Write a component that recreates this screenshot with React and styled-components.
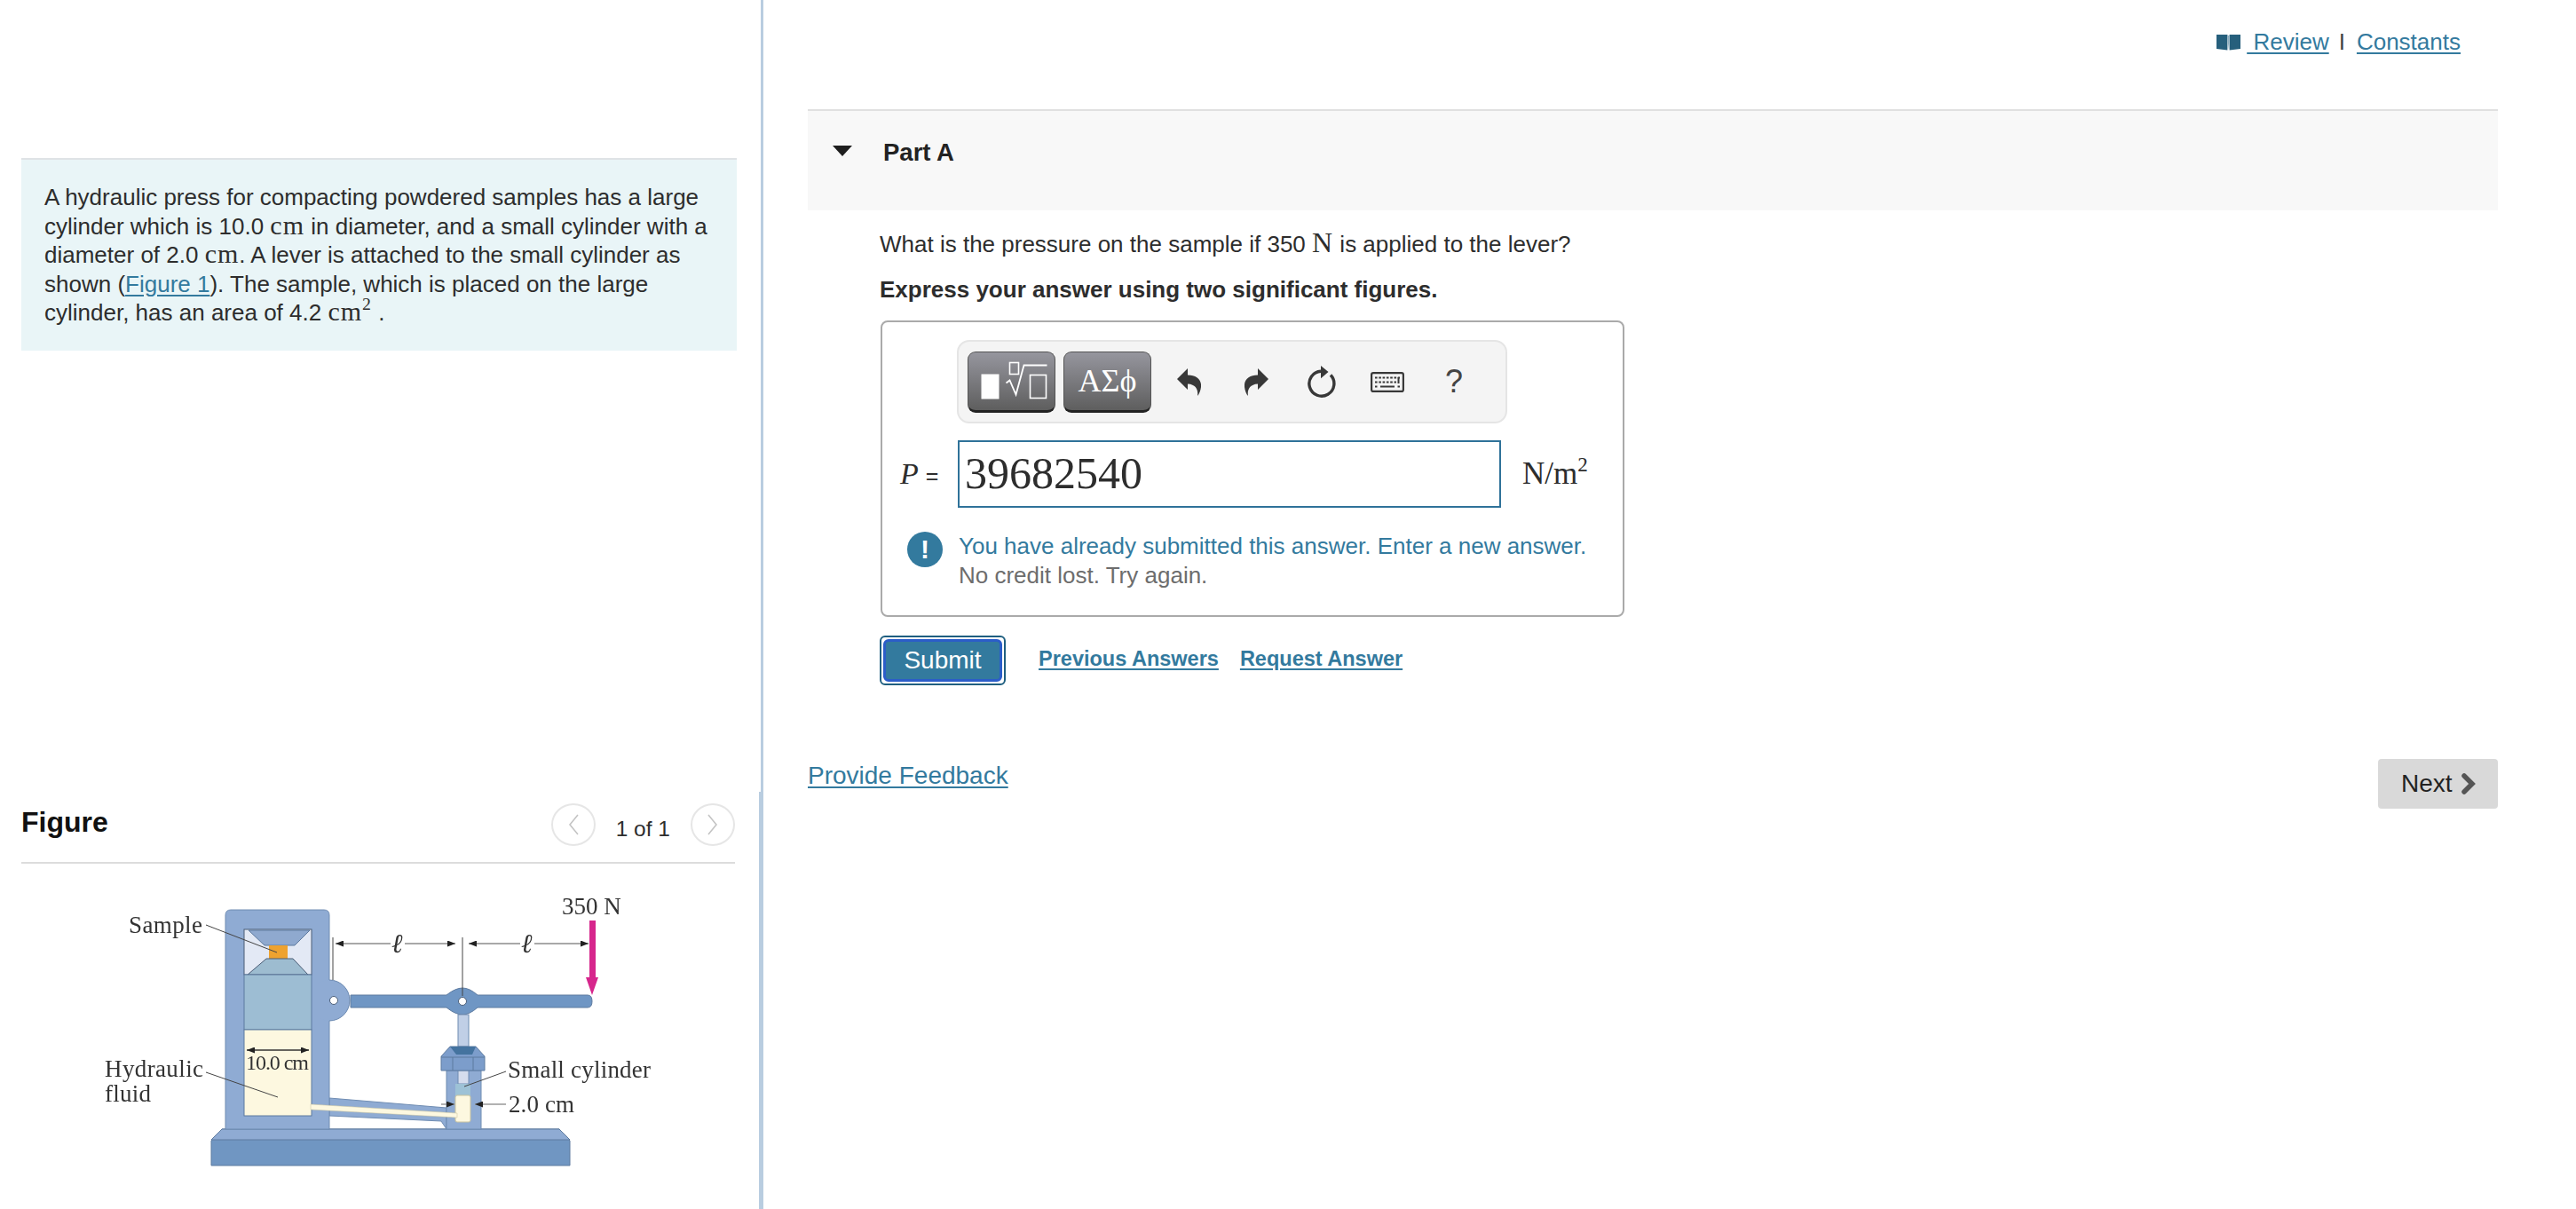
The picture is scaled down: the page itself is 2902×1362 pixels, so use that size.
import React from 'react';
import styled, { createGlobalStyle } from 'styled-components';

const GlobalStyle = createGlobalStyle`
  html, body {
    margin: 0;
    padding: 0;
    background: #fff;
  }
  body {
    font-family: "Liberation Sans", Arial, sans-serif;
    font-size: 26px;
    color: #2d2d2d;
  }
`;

const Page = styled.div`
  display: flex;
  width: 2902px;
  height: 1362px;
  overflow: hidden;
`;

const LeftColumn = styled.div`
  display: flex;
  flex-direction: column;
  width: 860px;
  flex: none;
`;

const ProblemPane = styled.section`
  height: 892px;
  box-sizing: border-box;
  padding: 178px 27px 0 24px;
  border-right: 3px solid #b9cde0;
`;

const InfoBox = styled.div`
  width: 806px;
  height: 217px;
  box-sizing: border-box;
  padding: 26px 26px 0;
  background: #e9f5f7;
  border-top: 2px solid #dfe3e6;
  font-size: 26px;
  line-height: 32.6px;
`;

const Link = styled.a`
  color: #337a9e;
  text-decoration: underline;
  text-underline-offset: 3px;
`;

const MathText = styled.span`
  font-family: "Liberation Serif", "Times New Roman", serif;
  font-size: ${(p) => p.$size || 30}px;
  line-height: 0;
  letter-spacing: 1px;
`;

const Sup = styled.sup`
  font-size: 0.66em;
  line-height: 0;
  vertical-align: 0.62em;
`;

const FigurePane = styled.section`
  flex: 1;
  box-sizing: border-box;
  padding: 13px 30px 0 24px;
  border-right: 5px solid #b9cde0;
`;

const FigureHeader = styled.div`
  display: flex;
  align-items: center;
  justify-content: space-between;
  height: 66px;
  border-bottom: 2px solid #dcdcdc;
  width: 804px;
`;

const FigureTitle = styled.h2`
  margin: 0 0 24px;
  font-size: 32px;
  line-height: 38px;
  font-weight: 700;
  color: #111;
`;

const Pager = styled.div`
  display: flex;
  align-items: center;
  gap: 23px;
  margin-bottom: 19px;
`;

const PagerButton = styled.button`
  display: flex;
  align-items: center;
  justify-content: center;
  width: 50px;
  height: 48px;
  padding: 0;
  background: #fff;
  border: 2px solid #e6e6e6;
  border-radius: 50%;
`;

const PagerLabel = styled.span`
  font-size: 24.5px;
  line-height: 32px;
  margin-top: 10px;
`;

const Diagram = styled.svg`
  display: block;
  margin: 18px 0 0 76px;
  filter: blur(0.6px);
`;

const RightColumn = styled.main`
  flex: 1;
  display: flex;
  flex-direction: column;
  box-sizing: border-box;
  padding: 0 88px 0 50px;
`;

const TopLinks = styled.div`
  display: flex;
  align-items: center;
  justify-content: flex-end;
  height: 123px;
  box-sizing: border-box;
  padding: 0 42px 28px 0;
  font-size: 26px;
`;

const Separator = styled.span`
  margin: 0 13px 0 11px;
  color: #444;
`;

const PartHeader = styled.div`
  display: flex;
  align-items: flex-start;
  height: 114px;
  box-sizing: border-box;
  padding: 29px 0 0 28px;
  background: #f8f8f8;
  border-top: 2px solid #e0e0e0;
`;

const PartTitle = styled.h3`
  margin: 0 0 0 35px;
  font-size: 27.5px;
  line-height: 36px;
  font-weight: 700;
  color: #222;
`;

const Triangle = styled.span`
  display: block;
  width: 0;
  height: 0;
  margin-top: 10px;
  border-left: 11px solid transparent;
  border-right: 11px solid transparent;
  border-top: 12px solid #1e1e1e;
`;

const PartBody = styled.div`
  padding: 0 0 0 81px;
`;

const Question = styled.p`
  margin: 20px 0 0;
  font-size: 26px;
  line-height: 36px;
`;

const Instruction = styled.p`
  margin: 15px 0 0;
  font-size: 26px;
  line-height: 36px;
  font-weight: 700;
`;

const AnswerCard = styled.div`
  width: 838px;
  height: 334px;
  box-sizing: border-box;
  margin: 17px 0 0 1px;
  padding: 20px 0 0 84px;
  border: 2px solid #aaa;
  border-radius: 8px;
`;

const Toolbar = styled.div`
  display: flex;
  align-items: center;
  width: 620px;
  height: 94px;
  box-sizing: border-box;
  padding: 0 0 0 10px;
  background: #f4f4f4;
  border: 2px solid #e5e5e5;
  border-radius: 14px;
`;

const ToolButton = styled.button`
  display: flex;
  align-items: center;
  justify-content: center;
  width: 99px;
  height: 69px;
  margin-right: 9px;
  padding: 0;
  color: #fff;
  background: linear-gradient(#96969e, #5e5e5e);
  border: 1px solid #555;
  border-bottom: 3px solid #222;
  border-radius: 9px;
  font-family: "Liberation Serif", serif;
  font-size: 36px;
`;

const ToolIcon = styled.span`
  display: flex;
  justify-content: center;
  width: ${(p) => p.$w}px;
  margin-left: ${(p) => p.$ml}px;
`;

const HelpMark = styled.span`
  font-size: 36px;
  color: #444;
  margin-left: 46px;
`;

const AnswerRow = styled.div`
  display: flex;
  align-items: center;
  height: 76px;
  margin: 19px 0 0 -64px;
`;

const AnswerLabel = styled.span`
  width: 65px;
  font-family: "Liberation Sans", sans-serif;
  font-size: 25px;
  white-space: nowrap;
`;

const VarName = styled.i`
  font-family: "Liberation Serif", serif;
  font-size: 34px;
  margin-right: 8px;
`;

const AnswerInput = styled.div`
  width: 612px;
  height: 76px;
  box-sizing: border-box;
  padding: 0 6px;
  border: 2px solid #2f7299;
  font-family: "Liberation Serif", serif;
  font-size: 50px;
  line-height: 70px;
  color: #2d2d2d;
`;

const UnitText = styled.span`
  margin-left: 24px;
  font-family: "Liberation Serif", serif;
  font-size: 35px;
  color: #2d2d2d;
`;

const Feedback = styled.div`
  display: flex;
  margin: 27px 0 0 -84px;
  padding-left: 28px;
`;

const FeedbackBadge = styled.span`
  display: flex;
  align-items: center;
  justify-content: center;
  flex: none;
  width: 40px;
  height: 40px;
  margin-right: 18px;
  border-radius: 50%;
  background: #337a9e;
  color: #fff;
  font-size: 30px;
  font-weight: 700;
`;

const FeedbackText = styled.div`
  font-size: 26px;
  line-height: 33px;
  white-space: nowrap;
  color: ${(p) => (p.$muted ? '#6d6d6d' : '#337a9e')};
`;

const ActionRow = styled.div`
  display: flex;
  align-items: center;
  margin-top: 21px;
`;

const SubmitButton = styled.button`
  display: block;
  width: 134px;
  height: 48px;
  padding: 0;
  color: #fff;
  background: #337a9e;
  border: 3px solid #2b5dc8;
  border-radius: 6px;
  font-family: "Liberation Sans", sans-serif;
  font-size: 28px;
`;

const SubmitFrame = styled.span`
  display: block;
  margin-right: 37px;
  padding: 2px;
  background: #fff;
  border: 2px solid #1f5f80;
  border-radius: 6px;
`;

const ActionLink = styled(Link)`
  margin-right: 24px;
  font-size: 23.5px;
  font-weight: 700;
  margin-top: -3px;
`;

const FooterRow = styled.div`
  display: flex;
  align-items: flex-start;
  justify-content: space-between;
  margin-top: 85px;
`;

const FeedbackLink = styled(Link)`
  font-size: 28px;
  line-height: 34px;
`;

const NextButton = styled.button`
  display: flex;
  align-items: center;
  width: 135px;
  height: 56px;
  margin-top: -2px;
  padding: 0 0 0 26px;
  color: #222;
  background: #d9d9d9;
  border: none;
  border-radius: 4px;
  font-family: "Liberation Sans", sans-serif;
  font-size: 28px;
`;

const BookIcon = () => (
  <svg width="27" height="20" viewBox="0 0 27 20" style={{ marginRight: 7 }}>
    <path d="M0 1h12.4v17.6L0 17z" fill="#265f7c" />
    <path d="M14.6 1H27v16l-12.4 1.6z" fill="#265f7c" />
    <path d="M12.4 2l1.1 17 1.1-17" fill="#8fb0c2" />
  </svg>
);

const Chevron = ({ dir }) => (
  <svg width="14" height="26" viewBox="0 0 14 26">
    <path d={dir === 'left' ? 'M12 2 3 13l9 11' : 'M2 2l9 11-9 11'} fill="none" stroke="#c4c4c4" strokeWidth="1.6" />
  </svg>
);

const RadicalIcon = () => (
  <svg width="92" height="60" viewBox="1093.5 399.5 92 60">
    <rect x="1105" y="422" width="20" height="28" fill="#fff" />
    <rect x="1137" y="409" width="10" height="13" fill="none" stroke="#fff" strokeWidth="1.6" />
    <path d="M1133 432l4-3 7 16 9-33h26" fill="none" stroke="#fff" strokeWidth="1.8" />
    <rect x="1160" y="423" width="18" height="26" fill="none" stroke="#fff" strokeWidth="1.6" />
  </svg>
);

const UndoIcon = ({ flip }) => (
  <svg width="27" height="31" viewBox="0 0 27 31" style={flip ? { transform: 'scaleX(-1)' } : undefined}>
    <path
      d="M0 12 12 0v7.5c10 0 16 5.500 15 13.500-.5 4-2 8-4 10 1-6-1-13-11-13.500V24z"
      fill="#383838"
    />
  </svg>
);

const RefreshIcon = () => (
  <svg width="32" height="36" viewBox="0 0 32 36">
    <path d="M15 6.200A14 14 0 1 0 26 10.500" fill="none" stroke="#383838" strokeWidth="3.400" />
    <path d="M15 0l8.500 7L15 14.300z" fill="#383838" />
  </svg>
);

const KeyboardIcon = () => (
  <svg width="38" height="23" viewBox="0 0 38 23">
    <rect x="1.100" y="1.100" width="35.800" height="20.800" rx="2" fill="#f4f4f4" stroke="#383838" strokeWidth="2.200" />
    <path d="M5 6.500h28" stroke="#383838" strokeWidth="2.200" strokeDasharray="2.600 1.700" />
    <path d="M5 11.500h24" stroke="#383838" strokeWidth="2.200" strokeDasharray="2.600 1.700" />
    <path d="M31.500 6v7" stroke="#383838" strokeWidth="2" />
    <path d="M5 16.500h2.500M11 16.500h16M30.500 16.500H33" stroke="#383838" strokeWidth="2.200" />
  </svg>
);

const NextChevron = () => (
  <svg width="18" height="26" viewBox="0 0 18 26" style={{ marginLeft: 9 }}>
    <path d="M4 4l9 9-9 9" fill="none" stroke="#555" strokeWidth="5.500" strokeLinecap="round" />
  </svg>
);

const PressDiagram = () => (
  <Diagram width="660" height="340" viewBox="100 990 660 340">
    <defs>
      <marker id="tip" markerUnits="userSpaceOnUse" markerWidth="9" markerHeight="7" refX="9" refY="3.500" orient="auto-start-reverse">
        <path d="M0 0l9 3.500-9 3.500z" fill="#222" />
      </marker>
    </defs>
    {/* base */}
    <path d="M250 1271h380l12 13v28H238v-28z" fill="#7096c2" stroke="#5d7a9f" />
    <path d="M250 1271h380l12 12H238z" fill="#8fabd3" stroke="#5d7a9f" />
    {/* pipe */}
    <path d="M371 1236l132 11v24l-6-9-126-6z" fill="#8fabd3" stroke="#6f8cb2" />
    {/* large cylinder frame */}
    <path d="M371 1271H254V1030q0-6 6-6h105q6 0 6 6z" fill="#8fabd3" stroke="#6f8cb2" />
    <circle cx="371" cy="1126" r="23" fill="#8fabd3" />
    <path d="M371 1103a23 23 0 0 1 0 46" fill="#8fabd3" stroke="#6f8cb2" />
    <circle cx="376" cy="1126" r="4.500" fill="#fff" stroke="#4b5f7a" />
    <rect x="275" y="1046" width="76" height="51" fill="#e3e9f5" stroke="#4a5c75" />
    <path d="M280 1047h69l-17 17h-34z" fill="#8fa9cf" stroke="#5d7a9f" />
    <rect x="303" y="1064" width="21" height="15" fill="#eea22f" />
    <path d="M300 1079h30l17 18h-68z" fill="#9dbcd0" stroke="#4a5c75" />
    <rect x="275" y="1097" width="76" height="62" fill="#9dbdd3" stroke="#5d7a9f" />
    <rect x="275" y="1159" width="76" height="97" fill="#fdf8e0" stroke="#5d7a9f" />
    {/* lever */}
    <path
      d="M395 1120h108q10-8 18-8t17 8h124q5 0 5 7t-5 7H538q-9 8-17 8t-18-8H395z"
      fill="#6f96c4"
      stroke="#5d7a9f"
    />
    <circle cx="521" cy="1127" r="4.500" fill="#fff" stroke="#4b5f7a" />
    <rect x="516" y="1142" width="12" height="36" fill="#c0cfe6" stroke="#6f8cb2" />
    {/* small cylinder */}
    <rect x="503" y="1205" width="39" height="66" fill="#8fabd3" stroke="#6f8cb2" />
    <rect x="516" y="1205" width="12" height="15" fill="#d5dded" stroke="#6f8cb2" />
    <rect x="513" y="1220" width="17" height="14" fill="#9dc2d6" />
    <rect x="513" y="1233" width="17" height="30" rx="2" fill="#fdf8e0" stroke="#c9c39f" />
    <path d="M497 1189l10-11h29l10 11v16h-49z" fill="#7c9dcb" stroke="#5d7a9f" />
    <path d="M507 1178h29l-4 9h-18z" fill="#44739f" />
    <path d="M497 1190h49M510 1190v15M533 1190v15" stroke="#5d7a9f" fill="none" />
    <path d="M350 1243v6l165 9v-5z" fill="#fdf8e0" stroke="#c9c39f" strokeWidth="0.500" />
    {/* dimensions */}
    <path d="M375 1055v48M521 1055v66" stroke="#444" strokeWidth="1" />
    <path d="M378 1062h135" stroke="#a8a8a8" strokeWidth="2" markerStart="url(#tip)" markerEnd="url(#tip)" />
    <path d="M528 1062h135" stroke="#a8a8a8" strokeWidth="2" markerStart="url(#tip)" markerEnd="url(#tip)" />
    <rect x="440" y="1050" width="16" height="24" fill="#fff" />
    <rect x="586" y="1050" width="16" height="24" fill="#fff" />
    <path d="M278 1182h70" stroke="#333" strokeWidth="1.500" markerStart="url(#tip)" markerEnd="url(#tip)" />
    <path d="M570 1243h-35" stroke="#999" strokeWidth="1.500" markerEnd="url(#tip)" />
    <path d="M497 1243h15" stroke="#999" strokeWidth="1.500" markerEnd="url(#tip)" />
    {/* force arrow */}
    <path d="M664 1036h7v64h3l-7 20-7-20h4z" fill="#d6268c" />
    {/* leaders */}
    <path d="M232 1041l80 31M232 1207l81 28M570 1206l-47 17" stroke="#444" strokeWidth="1" fill="none" />
    <g fontFamily='"Liberation Serif", serif' fill="#333" fontSize="27">
      <text x="633" y="1029">350 N</text>
      <text x="572" y="1213" textLength="161">Small cylinder</text>
      <text x="573" y="1252" textLength="74">2.0 cm</text>
      <text x="145" y="1050" textLength="83">Sample</text>
      <text x="118" y="1212" textLength="111">Hydraulic</text>
      <text x="118" y="1240" textLength="52">fluid</text>
      <text x="277" y="1204" fontSize="24" textLength="71">10.0 cm</text>
      <text x="441" y="1072" fontStyle="italic" fontSize="30">ℓ</text>
      <text x="587" y="1072" fontStyle="italic" fontSize="30">ℓ</text>
    </g>
  </Diagram>
);

export default function App() {
  return (
    <>
      <GlobalStyle />
      <Page>
        <LeftColumn>
          <ProblemPane>
            <InfoBox>
              A hydraulic press for compacting powdered samples has a large cylinder which is 10.0{' '}
              <MathText>cm</MathText> in diameter, and a small cylinder with a diameter of 2.0{' '}
              <MathText>cm</MathText>. A lever is attached to the small cylinder as shown (<Link>Figure 1</Link>). The
              sample, which is placed on the large cylinder, has an area of 4.2{' '}
              <MathText>
                cm<Sup>2</Sup>
              </MathText>{' '}
              .
            </InfoBox>
          </ProblemPane>
          <FigurePane>
            <FigureHeader>
              <FigureTitle>Figure</FigureTitle>
              <Pager>
                <PagerButton>
                  <Chevron dir="left" />
                </PagerButton>
                <PagerLabel>1 of 1</PagerLabel>
                <PagerButton>
                  <Chevron dir="right" />
                </PagerButton>
              </Pager>
            </FigureHeader>
            <PressDiagram />
          </FigurePane>
        </LeftColumn>
        <RightColumn>
          <TopLinks>
            <BookIcon />
            <Link>{'\u00a0Review'}</Link>
            <Separator>I</Separator>
            <Link>Constants</Link>
          </TopLinks>
          <PartHeader>
            <Triangle />
            <PartTitle>Part A</PartTitle>
          </PartHeader>
          <PartBody>
            <Question>
              What is the pressure on the sample if 350 <MathText $size={32}>N</MathText> is applied to the lever?
            </Question>
            <Instruction>Express your answer using two significant figures.</Instruction>
            <AnswerCard>
              <Toolbar>
                <ToolButton>
                  <RadicalIcon />
                </ToolButton>
                <ToolButton>ΑΣϕ</ToolButton>
                <ToolIcon $w={27} $ml={20}>
                  <UndoIcon />
                </ToolIcon>
                <ToolIcon $w={27} $ml={49}>
                  <UndoIcon flip />
                </ToolIcon>
                <ToolIcon $w={32} $ml={44}>
                  <RefreshIcon />
                </ToolIcon>
                <ToolIcon $w={38} $ml={39}>
                  <KeyboardIcon />
                </ToolIcon>
                <HelpMark>?</HelpMark>
              </Toolbar>
              <AnswerRow>
                <AnswerLabel>
                  <VarName>P</VarName>=
                </AnswerLabel>
                <AnswerInput>39682540</AnswerInput>
                <UnitText>
                  N/m<Sup>2</Sup>
                </UnitText>
              </AnswerRow>
              <Feedback>
                <FeedbackBadge>!</FeedbackBadge>
                <div>
                  <FeedbackText>You have already submitted this answer. Enter a new answer.</FeedbackText>
                  <FeedbackText $muted>No credit lost. Try again.</FeedbackText>
                </div>
              </Feedback>
            </AnswerCard>
            <ActionRow>
              <SubmitFrame>
                <SubmitButton>Submit</SubmitButton>
              </SubmitFrame>
              <ActionLink>Previous Answers</ActionLink>
              <ActionLink>Request Answer</ActionLink>
            </ActionRow>
          </PartBody>
          <FooterRow>
            <FeedbackLink>Provide Feedback</FeedbackLink>
            <NextButton>
              Next
              <NextChevron />
            </NextButton>
          </FooterRow>
        </RightColumn>
      </Page>
    </>
  );
}
